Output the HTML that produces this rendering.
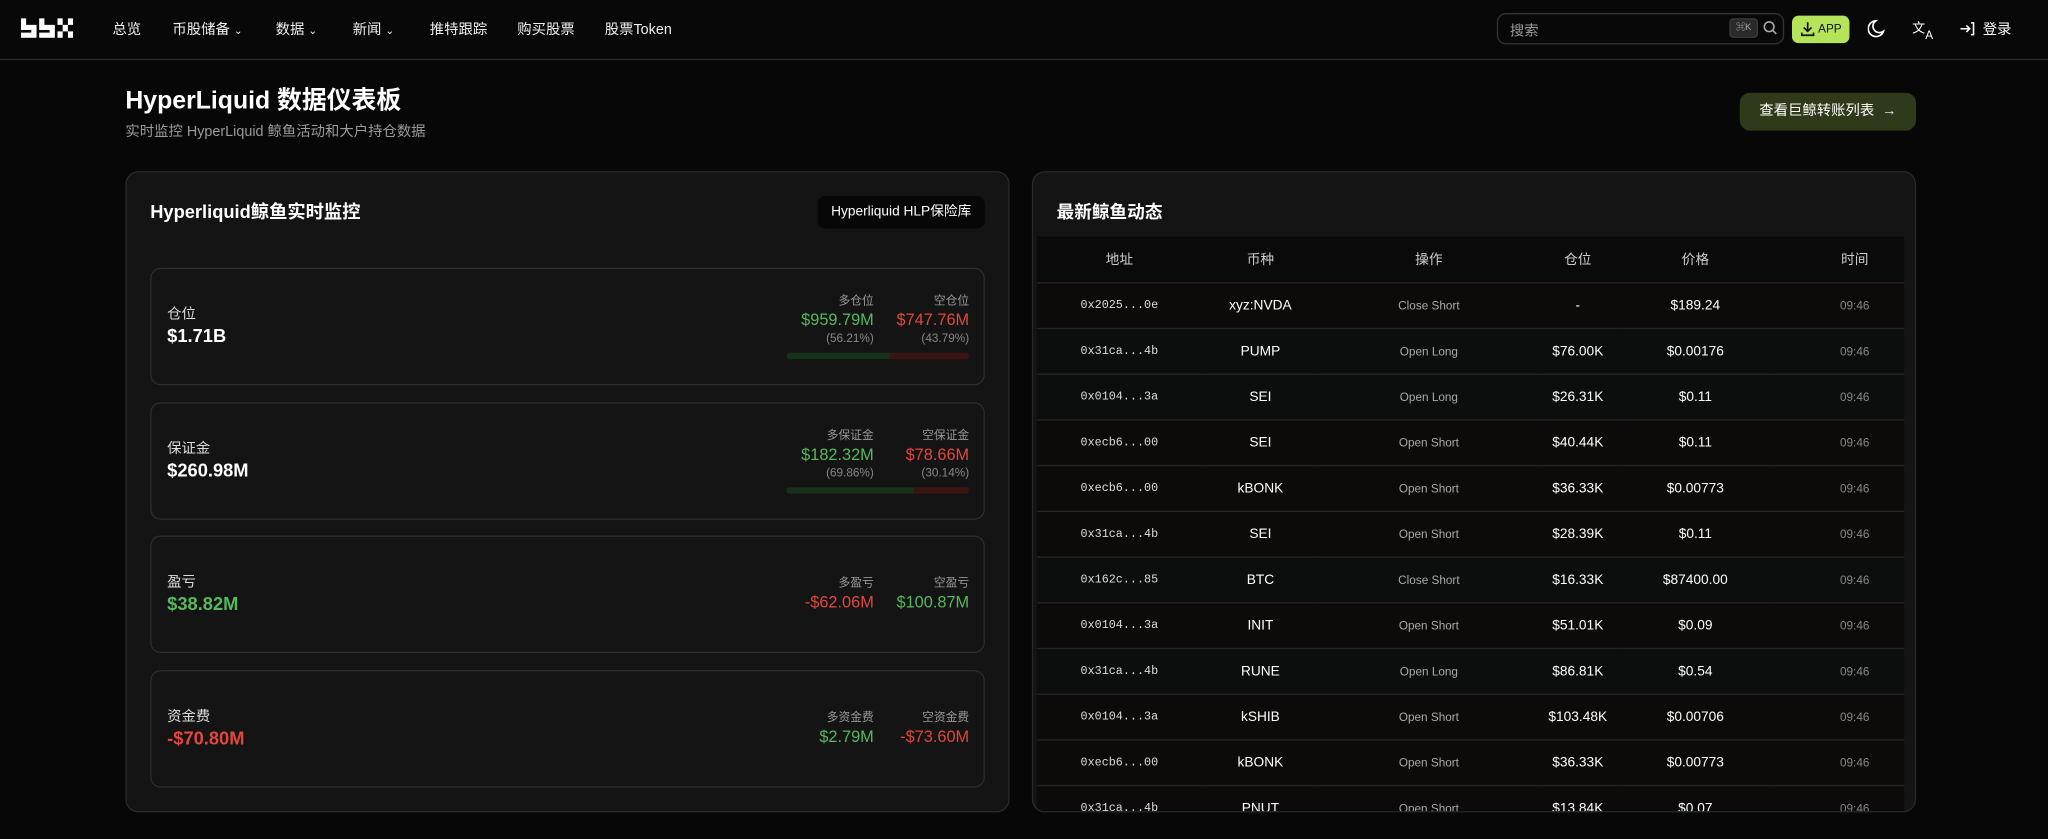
<!DOCTYPE html>
<html><head><meta charset="utf-8"><style>
*{box-sizing:border-box;margin:0;padding:0}
html,body{width:2048px;height:839px;overflow:hidden;background:#070707}
#w{width:1568px;height:643px;transform:scale(1.30612);transform-origin:0 0;position:relative;font-family:"Liberation Sans","Noto Sans CJK SC",sans-serif;color:#fff;background:#070707}
.a{position:absolute}
.nav{left:0;top:0;width:1568px;height:46px;border-bottom:1px solid #2c2c2c;background:#080808}
.ni{top:14px;font-size:11px;color:#eee}
.panel{background:#141414;border:1px solid #2a2a2a;border-radius:10px}
.card{left:18px;width:639px;height:90px;border:1px solid #2d2d2d;border-radius:8px;background:#141414}
.lab{left:12px;font-size:11px;color:#ddd}
.val{left:12px;font-size:14px;font-weight:bold}
.g{color:#55b95d}.r{color:#e2473d}
.col{text-align:right}
.sl{font-size:9px;color:#999}
.sv{font-size:12.5px;margin-top:2px}
.sp{font-size:9px;color:#888;margin-top:2px}
.bar{left:486px;width:140px;height:5px;border-radius:3px;overflow:hidden;display:flex}
table{border-collapse:collapse;width:664px;font-size:10.5px}
td,th{text-align:center;height:35px;border-bottom:1px solid #262626}
th{font-weight:normal;color:#ccc;background:#0a0a0a;font-size:10.5px}
td.ad{font-family:"Liberation Mono",monospace;font-size:9px;color:#ddd}
td.op{font-size:9px;color:#aaa}
td.t{font-size:9px;color:#888}
td:last-child,th:last-child{padding-left:24px}
tr.L td{background:#0b0e0c}tr.S td{background:#0e0a0a}
</style></head><body><div id="w">
<div class="a nav">
<svg class="a" style="left:16px;top:14px" width="40" height="15" viewBox="0 0 40 15" fill="#fff"><path d="M0 0h4v5h8v10H0v-4h8V9H0zM14 0h4v5h8v10H14v-4h8V9h-8zM28 0h4v5h4V0h4v5h-4v5h4v5h-4v-5h-4v5h-4v-5h4V5h-4z"/></svg>
<div class="a ni" style="left:86px">总览</div>
<div class="a ni" style="left:132px">币股储备 <span style="font-size:8px">⌄</span></div>
<div class="a ni" style="left:211px">数据 <span style="font-size:8px">⌄</span></div>
<div class="a ni" style="left:270px">新闻 <span style="font-size:8px">⌄</span></div>
<div class="a ni" style="left:329px">推特跟踪</div>
<div class="a ni" style="left:396px">购买股票</div>
<div class="a ni" style="left:463px">股票Token</div>
<div class="a" style="left:1146px;top:10px;width:220px;height:24px;border:1px solid #333;border-radius:7px"></div>
<div class="a" style="left:1156px;top:15px;font-size:11px;color:#999">搜索</div>
<div class="a" style="left:1324px;top:14px;width:22px;height:15px;background:#2a2a2a;border:1px solid #3a3a3a;border-radius:3px;font-size:7px;color:#aaa;text-align:center;line-height:13px">⌘K</div>
<svg class="a" style="left:1350px;top:16px" width="11" height="11" viewBox="0 0 11 11" fill="none" stroke="#aaa" stroke-width="1.2"><circle cx="4.5" cy="4.5" r="3.7"/><path d="M7.3 7.3L10 10"/></svg>
<div class="a" style="left:1372px;top:12px;width:44px;height:21px;background:#b5e45a;border-radius:5px;color:#111;font-size:9px;line-height:21px;padding-left:20px">APP</div>
<svg class="a" style="left:1378px;top:16px" width="12" height="12" viewBox="0 0 12 12" fill="none" stroke="#111" stroke-width="1.3"><path d="M6 1v7M3 5l3 3 3-3M1.5 9v2h9V9"/></svg>
<svg class="a" style="left:1430px;top:15px" width="13" height="14" viewBox="0 0 13 14" fill="none" stroke="#fff" stroke-width="1.3"><path d="M6 1a6 6 0 1 0 6 8A5 5 0 0 1 6 1z"/></svg>
<div class="a" style="left:1464px;top:13px;font-size:10px">文<span style="font-size:9px;position:relative;top:5px">A</span></div>
<svg class="a" style="left:1500px;top:16px" width="12" height="12" viewBox="0 0 12 12" fill="none" stroke="#fff" stroke-width="1.2"><path d="M1 6h7M5.5 3.5L8 6 5.5 8.5M9 1.5h2v9H9"/></svg>
<div class="a" style="left:1518px;top:14px;font-size:11px">登录</div>
</div>
<div class="a" style="left:96px;top:62px;font-size:19px;font-weight:bold">HyperLiquid 数据仪表板</div>
<div class="a" style="left:96px;top:92px;font-size:11px;color:#9a9a9a">实时监控 HyperLiquid 鲸鱼活动和大户持仓数据</div>
<div class="a" style="left:1332px;top:71px;width:135px;height:29px;background:#2e3a1a;border-radius:8px;font-size:11px;line-height:29px;text-align:center">查看巨鲸转账列表 &nbsp;→</div>

<div class="a panel" style="left:96px;top:131px;width:677px;height:491px">
<div class="a" style="left:18px;top:20px;font-size:14px;font-weight:bold">Hyperliquid鲸鱼实时监控</div>
<div class="a" style="left:529px;top:18px;width:128px;height:25px;background:#070707;border-radius:6px;font-size:10.5px;line-height:25px;text-align:center">Hyperliquid HLP保险库</div>

<div class="a card" style="top:73px">
<div class="a lab" style="top:26px">仓位</div><div class="a val" style="top:43px">$1.71B</div>
<div class="a col" style="right:84px;top:17px"><div class="sl">多仓位</div><div class="sv g">$959.79M</div><div class="sp">(56.21%)</div></div>
<div class="a col" style="right:11px;top:17px"><div class="sl">空仓位</div><div class="sv r">$747.76M</div><div class="sp">(43.79%)</div></div>
<div class="a bar" style="top:64px"><div style="width:56.2%;background:#173019"></div><div style="flex:1;background:#3b1414"></div></div>
</div>
<div class="a card" style="top:176px">
<div class="a lab" style="top:26px">保证金</div><div class="a val" style="top:43px">$260.98M</div>
<div class="a col" style="right:84px;top:17px"><div class="sl">多保证金</div><div class="sv g">$182.32M</div><div class="sp">(69.86%)</div></div>
<div class="a col" style="right:11px;top:17px"><div class="sl">空保证金</div><div class="sv r">$78.66M</div><div class="sp">(30.14%)</div></div>
<div class="a bar" style="top:64px"><div style="width:69.9%;background:#173019"></div><div style="flex:1;background:#3b1414"></div></div>
</div>
<div class="a card" style="top:278px">
<div class="a lab" style="top:26px">盈亏</div><div class="a val g" style="top:43px">$38.82M</div>
<div class="a col" style="right:84px;top:28px"><div class="sl">多盈亏</div><div class="sv r">-$62.06M</div></div>
<div class="a col" style="right:11px;top:28px"><div class="sl">空盈亏</div><div class="sv g">$100.87M</div></div>
</div>
<div class="a card" style="top:381px">
<div class="a lab" style="top:26px">资金费</div><div class="a val r" style="top:43px">-$70.80M</div>
<div class="a col" style="right:84px;top:28px"><div class="sl">多资金费</div><div class="sv g">$2.79M</div></div>
<div class="a col" style="right:11px;top:28px"><div class="sl">空资金费</div><div class="sv r">-$73.60M</div></div>
</div>
</div>

<div class="a panel" style="left:790px;top:131px;width:677px;height:491px;overflow:hidden">
<div class="a" style="left:18px;top:19px;font-size:13.5px;font-weight:bold">最新鲸鱼动态</div>
<div class="a" style="left:3px;top:49px;width:664px;height:450px;overflow:hidden">
<table>
<colgroup><col style="width:126px"><col style="width:90px"><col style="width:168px"><col style="width:60px"><col style="width:120px"><col></colgroup>
<tr><th>地址</th><th>币种</th><th>操作</th><th>仓位</th><th>价格</th><th>时间</th></tr>
<tr class="S"><td class="ad">0x2025...0e</td><td>xyz:NVDA</td><td class="op">Close Short</td><td>-</td><td>$189.24</td><td class="t">09:46</td></tr>
<tr class="L"><td class="ad">0x31ca...4b</td><td>PUMP</td><td class="op">Open Long</td><td>$76.00K</td><td>$0.00176</td><td class="t">09:46</td></tr>
<tr class="L"><td class="ad">0x0104...3a</td><td>SEI</td><td class="op">Open Long</td><td>$26.31K</td><td>$0.11</td><td class="t">09:46</td></tr>
<tr class="S"><td class="ad">0xecb6...00</td><td>SEI</td><td class="op">Open Short</td><td>$40.44K</td><td>$0.11</td><td class="t">09:46</td></tr>
<tr class="S"><td class="ad">0xecb6...00</td><td>kBONK</td><td class="op">Open Short</td><td>$36.33K</td><td>$0.00773</td><td class="t">09:46</td></tr>
<tr class="S"><td class="ad">0x31ca...4b</td><td>SEI</td><td class="op">Open Short</td><td>$28.39K</td><td>$0.11</td><td class="t">09:46</td></tr>
<tr class="L"><td class="ad">0x162c...85</td><td>BTC</td><td class="op">Close Short</td><td>$16.33K</td><td>$87400.00</td><td class="t">09:46</td></tr>
<tr class="S"><td class="ad">0x0104...3a</td><td>INIT</td><td class="op">Open Short</td><td>$51.01K</td><td>$0.09</td><td class="t">09:46</td></tr>
<tr class="L"><td class="ad">0x31ca...4b</td><td>RUNE</td><td class="op">Open Long</td><td>$86.81K</td><td>$0.54</td><td class="t">09:46</td></tr>
<tr class="S"><td class="ad">0x0104...3a</td><td>kSHIB</td><td class="op">Open Short</td><td>$103.48K</td><td>$0.00706</td><td class="t">09:46</td></tr>
<tr class="S"><td class="ad">0xecb6...00</td><td>kBONK</td><td class="op">Open Short</td><td>$36.33K</td><td>$0.00773</td><td class="t">09:46</td></tr>
<tr class="S"><td class="ad">0x31ca...4b</td><td>PNUT</td><td class="op">Open Short</td><td>$13.84K</td><td>$0.07</td><td class="t">09:46</td></tr>
</table>
</div>
</div>
</div></body></html>
